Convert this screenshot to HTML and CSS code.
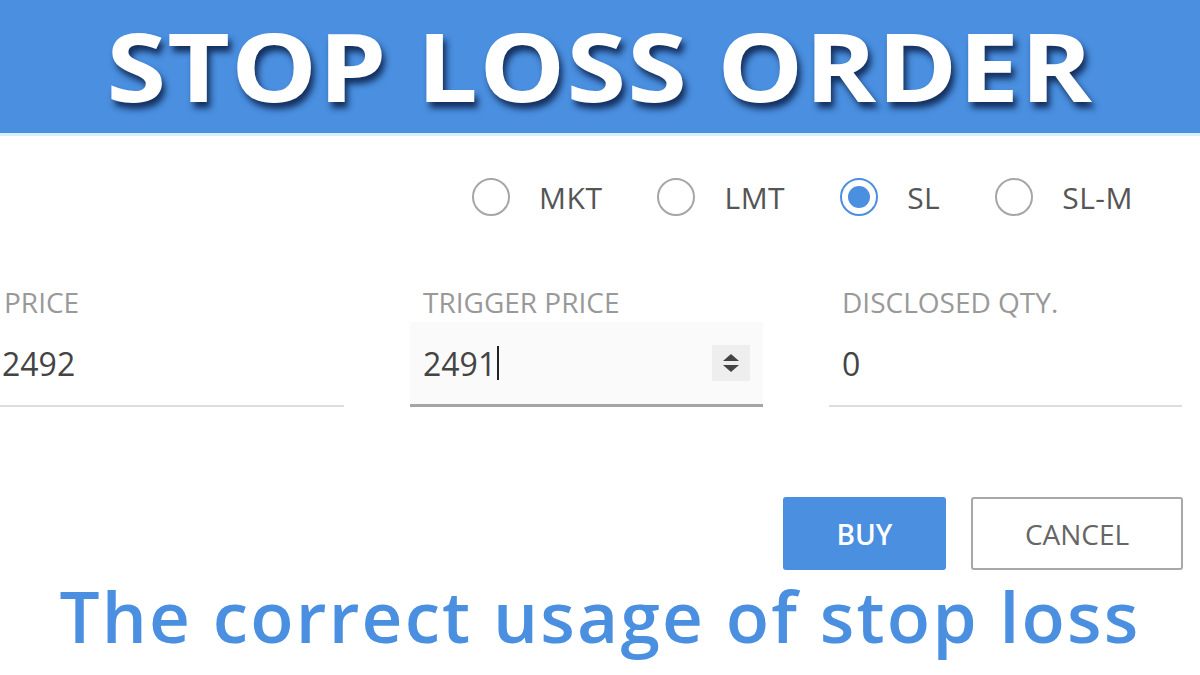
FILE: index.html
```html
<!DOCTYPE html>
<html>
<head>
<meta charset="utf-8">
<link rel="stylesheet" href="styles.css">
</head>
<body>
<header class="banner"><h1 class="banner-title">STOP LOSS ORDER</h1></header>
<main class="form">
  <div class="radios">
    <label class="radio"><span class="circle"></span><span class="radio-text">MKT</span></label>
    <label class="radio"><span class="circle"></span><span class="radio-text">LMT</span></label>
    <label class="radio"><span class="circle checked"></span><span class="radio-text">SL</span></label>
    <label class="radio"><span class="circle"></span><span class="radio-text">SL-M</span></label>
  </div>
  <div class="fields">
    <div class="field">
      <div class="field-label">PRICE</div>
      <div class="field-box"><span class="value">2492</span></div>
    </div>
    <div class="field">
      <div class="field-label">TRIGGER PRICE</div>
      <div class="field-box focused"><span class="value">2491</span><span class="caret"></span>
        <span class="spinner"><svg width="20" height="22" viewBox="0 0 20 22"><path d="M10 2 L18 9 H2 Z" fill="#444"/><path d="M2 13 H18 L10 20 Z" fill="#444"/></svg></span>
      </div>
    </div>
    <div class="field">
      <div class="field-label">DISCLOSED QTY.</div>
      <div class="field-box"><span class="value">0</span></div>
    </div>
  </div>
  <div class="actions">
    <button class="btn buy">BUY</button>
    <button class="btn cancel">CANCEL</button>
  </div>
</main>
<p class="tagline">The correct usage of stop loss</p>
</body>
</html>
```
FILE: styles.css
```css
html, body {
  margin: 0;
  padding: 0;
  background: #fff;
  width: 1200px;
  height: 675px;
  overflow: hidden;
  font-family: "Open Sans", "Liberation Sans", sans-serif;
}
.banner {
  height: 133px;
  background: #4a8fe0;
  border-bottom: 3px solid #d4f1fb;
  display: flex;
  align-items: center;
  justify-content: center;
}
.banner-title {
  margin: 0;
  color: #fff;
  font-family: "Open Sans", sans-serif;
  font-weight: 700;
  font-size: 95px;
  letter-spacing: 1px;
  line-height: 1;
  padding-bottom: 2px;
  transform: scaleX(1.14);
  text-shadow: 3px 6px 6px rgba(10, 30, 70, 0.85);
}
.form {
  padding: 40px 17px 0 0;
}
.radios {
  display: flex;
  justify-content: flex-end;
  gap: 55px;
  padding-right: 50px;
  height: 42px;
  align-items: center;
}
.radio {
  display: flex;
  align-items: center;
  gap: 29px;
}
.circle {
  width: 38px;
  height: 38px;
  border: 2px solid #a6a6a6;
  border-radius: 50%;
  box-sizing: border-box;
  position: relative;
}
.circle.checked {
  border-color: #4a8fe0;
}
.circle.checked::after {
  content: "";
  position: absolute;
  left: 6px;
  top: 6px;
  width: 22px;
  height: 22px;
  border-radius: 50%;
  background: #4a8fe0;
}
.radio-text {
  font-size: 30px;
  letter-spacing: 0.5px;
  color: #555;
}
.fields {
  display: grid;
  grid-template-columns: 344px 353px 353px;
  column-gap: 66px;
  margin-top: 67px;
}
.field-label {
  font-size: 28px;
  color: #999;
  padding-left: 4px;
  height: 34px;
  line-height: 34px;
  white-space: nowrap;
}
.field:nth-child(2) .field-label,
.field:nth-child(3) .field-label {
  padding-left: 13px;
}
.field-box {
  height: 85px;
  border-bottom: 2px solid #ddd;
  display: flex;
  align-items: center;
  padding-left: 2px;
  margin-top: 3px;
  box-sizing: border-box;
}
.field:nth-child(2) .field-box,
.field:nth-child(3) .field-box {
  padding-left: 13px;
}
.field-box.focused {
  background: #fafafa;
  border-bottom: 3px solid #a5a5a5;
}
.value {
  font-size: 32px;
  color: #444;
}
.caret {
  width: 2px;
  height: 34px;
  background: #222;
  margin-left: 1px;
}
.spinner {
  margin-left: auto;
  margin-right: 13px;
  width: 38px;
  height: 36px;
  background: #eee;
  display: flex;
  align-items: center;
  justify-content: center;
}
.actions {
  display: flex;
  justify-content: flex-end;
  gap: 25px;
  margin-top: 90px;
}
.btn {
  font-family: "Open Sans", sans-serif;
  font-size: 28px;
  height: 73px;
  border-radius: 3px;
  cursor: pointer;
}
.buy {
  width: 163px;
  background: #4a8fe0;
  color: #fff;
  border: none;
  font-weight: 600;
}
.cancel {
  width: 212px;
  background: #fff;
  color: #666;
  border: 2px solid #a8a8a8;
}
.tagline {
  margin: 0;
  text-align: center;
  color: #4a8fe0;
  font-family: "Open Sans", sans-serif;
  font-weight: 600;
  font-size: 71px;
  letter-spacing: 2.2px;
  line-height: 1;
  margin-top: 10px;
}
```
